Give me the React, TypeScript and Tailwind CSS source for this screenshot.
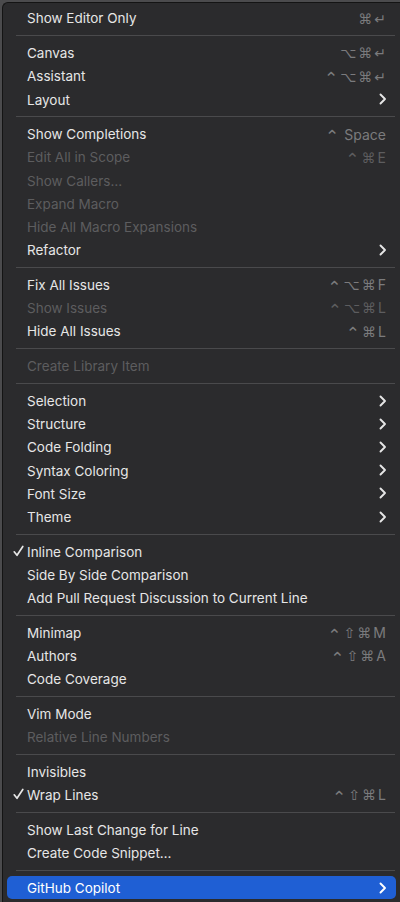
import React from 'react';

type Item = {
  label: string;
  keys?: string[];
  disabled?: boolean;
  sub?: boolean;
  checked?: boolean;
  active?: boolean;
};

const groups: Item[][] = [
  [{ label: 'Show Editor Only', keys: ['⌘', '↵'] }],
  [
    { label: 'Canvas', keys: ['⌥', '⌘', '↵'] },
    { label: 'Assistant', keys: ['⌃', '⌥', '⌘', '↵'] },
    { label: 'Layout', sub: true },
  ],
  [
    { label: 'Show Completions', keys: ['⌃', 'Space'] },
    { label: 'Edit All in Scope', keys: ['⌃', '⌘', 'E'], disabled: true },
    { label: 'Show Callers…', disabled: true },
    { label: 'Expand Macro', disabled: true },
    { label: 'Hide All Macro Expansions', disabled: true },
    { label: 'Refactor', sub: true },
  ],
  [
    { label: 'Fix All Issues', keys: ['⌃', '⌥', '⌘', 'F'] },
    { label: 'Show Issues', keys: ['⌃', '⌥', '⌘', 'L'], disabled: true },
    { label: 'Hide All Issues', keys: ['⌃', '⌘', 'L'] },
  ],
  [{ label: 'Create Library Item', disabled: true }],
  [
    { label: 'Selection', sub: true },
    { label: 'Structure', sub: true },
    { label: 'Code Folding', sub: true },
    { label: 'Syntax Coloring', sub: true },
    { label: 'Font Size', sub: true },
    { label: 'Theme', sub: true },
  ],
  [
    { label: 'Inline Comparison', checked: true },
    { label: 'Side By Side Comparison' },
    { label: 'Add Pull Request Discussion to Current Line' },
  ],
  [
    { label: 'Minimap', keys: ['⌃', '⇧', '⌘', 'M'] },
    { label: 'Authors', keys: ['⌃', '⇧', '⌘', 'A'] },
    { label: 'Code Coverage' },
  ],
  [
    { label: 'Vim Mode' },
    { label: 'Relative Line Numbers', disabled: true },
  ],
  [
    { label: 'Invisibles' },
    { label: 'Wrap Lines', keys: ['⌃', '⇧', '⌘', 'L'], checked: true },
  ],
  [
    { label: 'Show Last Change for Line' },
    { label: 'Create Code Snippet…' },
  ],
  [{ label: 'GitHub Copilot', sub: true, active: true }],
];

const symbols = ['⌘', '⌥', '⌃', '⇧', '↵'];

function Chevron() {
  return (
    <svg width="8" height="12" viewBox="0 0 8 12" className="shrink-0">
      <path d="M1.5 1.5 L6 6 L1.5 10.5" fill="none" stroke="currentColor" strokeWidth="1.9" strokeLinecap="round" strokeLinejoin="round" />
    </svg>
  );
}

function Check() {
  return (
    <svg width="11" height="12" viewBox="0 0 11 12">
      <path d="M1.2 6.8 L4 10.3 L9.8 1.5" fill="none" stroke="currentColor" strokeWidth="1.7" strokeLinecap="round" strokeLinejoin="round" />
    </svg>
  );
}

function Key({ k }: { k: string }) {
  if (symbols.includes(k)) {
    return (
      <span
        className={`font-['DejaVu_Sans',sans-serif] leading-none ${
          k === '⌃' ? 'text-[17px] pt-[5px]' : 'text-[14px] pt-[1px]'
        }`}
      >
        {k}
      </span>
    );
  }
  return <span className={`text-[14px] leading-none pt-[1px] ${k === 'Space' ? 'ml-[3px]' : ''}`}>{k}</span>;
}

function Row({ item }: { item: Item }) {
  const color = item.active
    ? 'text-white'
    : item.disabled
    ? 'text-[#5d5d5f]'
    : 'text-[#e6e6e6]';
  return (
    <div
      className={`relative flex items-center h-[23.2px] pl-[20px] pr-[9px] rounded-[5px] ${
        item.active ? 'bg-[#1f5fd4]' : ''
      } ${color}`}
    >
      {item.checked && (
        <span className="absolute left-[6px] top-[5px] text-[#e6e6e6]">
          <Check />
        </span>
      )}
      <span className="flex-1 text-[13.5px] leading-none pt-[2px] whitespace-nowrap">{item.label}</span>
      {item.keys && (
        <span
          className={`flex items-center gap-[2px] mr-[1px] ${
            item.disabled ? 'text-[#5d5d5f]' : 'text-[#7b7b7d]'
          }`}
        >
          {item.keys.map((k, i) => (
            <Key key={i} k={k} />
          ))}
        </span>
      )}
      {item.sub && <Chevron />}
    </div>
  );
}

export default function App() {
  return (
    <div className="w-[400px] h-[902px] overflow-hidden bg-[#4b4b4d] font-['Inter',sans-serif] antialiased">
      <div className="ml-[2px] mt-[2px] h-[910px] bg-[#2b2b2d] border-l border-t border-[#141414] rounded-tl-[6px] px-[4px] pt-[3.5px]">
        {groups.map((g, gi) => (
          <div key={gi}>
            {gi > 0 && (
              <div className="h-[11.6px] flex items-center ml-[9px] mr-[1px]">
                <div className="h-px w-full bg-[#4a4a4c]" />
              </div>
            )}
            {g.map((item) => (
              <Row key={item.label} item={item} />
            ))}
          </div>
        ))}
      </div>
    </div>
  );
}
